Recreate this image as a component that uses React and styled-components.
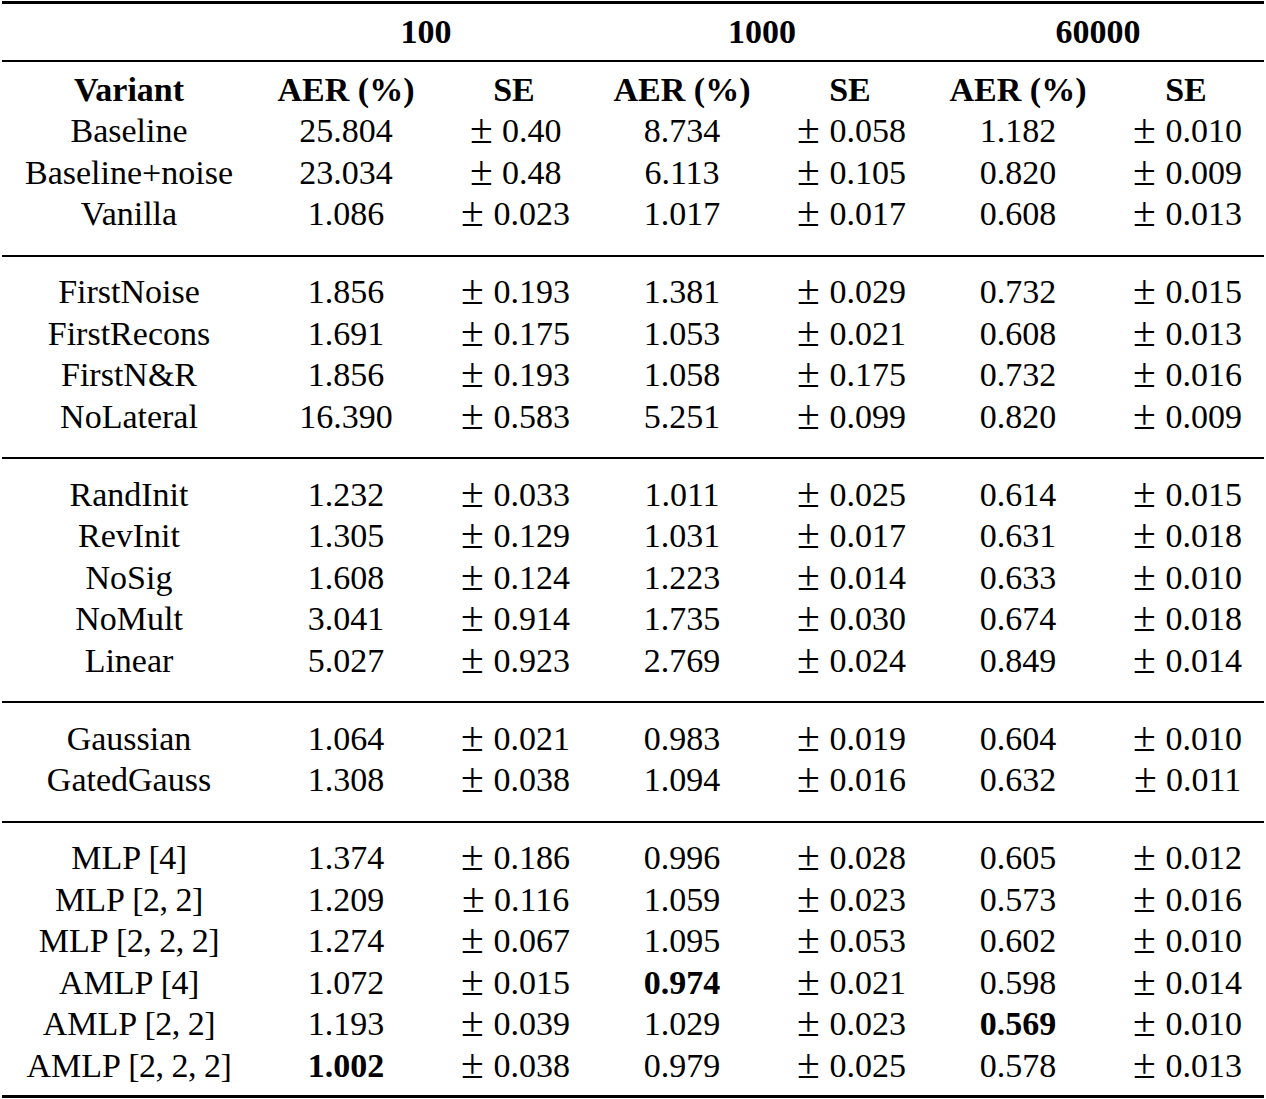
import React from 'react';
import styled, { createGlobalStyle } from 'styled-components';

const GlobalStyle = createGlobalStyle`
    html, body {
        margin: 0;
        padding: 0;
        background: #ffffff;
    }
    body {
        font-family: "Liberation Serif", "Times New Roman", serif;
        color: #000000;
    }
`;

const COLS = '258px 176px 160px 176px 160px 176px 160px';

// Styled
const Table = styled.div`
    width: 1266px;
    display: flex;
    flex-direction: column;
    font-size: 34px;
    padding-top: 1px;
`;

const Rule = styled.div`
    height: ${p => p.$weight}px;
    background: #000;
    margin: ${p => p.$above}px 2px ${p => p.$below}px;
`;

const GroupRow = styled.div`
    display: grid;
    grid-template-columns: 258px 336px 336px 336px;
    height: 55px;
    align-items: center;
    font-weight: bold;
`;

const Row = styled.div`
    display: grid;
    grid-template-columns: ${COLS};
    height: 41.5px;
    align-items: center;
    font-weight: ${p => (p.$head ? 'bold' : 'normal')};
    margin-top: ${p => p.$top || 0}px;
`;

const Cell = styled.div`
    text-align: center;
    white-space: nowrap;
    line-height: 1;
    font-weight: ${p => (p.$bold ? 'bold' : 'inherit')};
`;

const MathArg = styled.span`
    font-weight: normal;
    letter-spacing: -0.5px;
`;

const PlusMinus = styled.span`
    display: inline-block;
    width: 0.84em;
    text-align: center;
    margin-right: 0.2em;
    transform: translateY(-1px) scale(1.22);
`;

const groups = [
    [
        ['Baseline', '25.804', '0.40', '8.734', '0.058', '1.182', '0.010'],
        ['Baseline+noise', '23.034', '0.48', '6.113', '0.105', '0.820', '0.009'],
        ['Vanilla', '1.086', '0.023', '1.017', '0.017', '0.608', '0.013'],
    ],
    [
        ['FirstNoise', '1.856', '0.193', '1.381', '0.029', '0.732', '0.015'],
        ['FirstRecons', '1.691', '0.175', '1.053', '0.021', '0.608', '0.013'],
        ['FirstN&R', '1.856', '0.193', '1.058', '0.175', '0.732', '0.016'],
        ['NoLateral', '16.390', '0.583', '5.251', '0.099', '0.820', '0.009'],
    ],
    [
        ['RandInit', '1.232', '0.033', '1.011', '0.025', '0.614', '0.015'],
        ['RevInit', '1.305', '0.129', '1.031', '0.017', '0.631', '0.018'],
        ['NoSig', '1.608', '0.124', '1.223', '0.014', '0.633', '0.010'],
        ['NoMult', '3.041', '0.914', '1.735', '0.030', '0.674', '0.018'],
        ['Linear', '5.027', '0.923', '2.769', '0.024', '0.849', '0.014'],
    ],
    [
        ['Gaussian', '1.064', '0.021', '0.983', '0.019', '0.604', '0.010'],
        ['GatedGauss', '1.308', '0.038', '1.094', '0.016', '0.632', '0.011'],
    ],
    [
        [['MLP', '[4]'], '1.374', '0.186', '0.996', '0.028', '0.605', '0.012'],
        [['MLP', '[2, 2]'], '1.209', '0.116', '1.059', '0.023', '0.573', '0.016'],
        [['MLP', '[2, 2, 2]'], '1.274', '0.067', '1.095', '0.053', '0.602', '0.010'],
        [['AMLP', '[4]'], '1.072', '0.015', '*0.974', '0.021', '0.598', '0.014'],
        [['AMLP', '[2, 2]'], '1.193', '0.039', '1.029', '0.023', '*0.569', '0.010'],
        [['AMLP', '[2, 2, 2]'], '*1.002', '0.038', '0.979', '0.025', '0.578', '0.013'],
    ],
];

const Name = ({ value }) => Array.isArray(value)
    ? <>{value[0]} <MathArg>{value[1]}</MathArg></>
    : value;

const DataRow = ({ row }) => <Row>
    <Cell><Name value={row[0]} /></Cell>
    {row.slice(1).map((v, i) => {
        if (i % 2 === 1) {
            return <Cell key={i}><PlusMinus>±</PlusMinus>{v}</Cell>;
        }
        const bold = v.startsWith('*');
        return <Cell key={i} $bold={bold}>{bold ? v.slice(1) : v}</Cell>;
    })}
</Row>;

const App = () => <>
    <GlobalStyle />
    <Table>
        <Rule $weight={3} $above={0} $below={0} />
        <GroupRow>
            <Cell />
            <Cell>100</Cell>
            <Cell>1000</Cell>
            <Cell>60000</Cell>
        </GroupRow>
        <Rule $weight={2} $above={1} $below={0} />
        <Row $head $top={7}>
            <Cell>Variant</Cell>
            <Cell>AER (%)</Cell>
            <Cell>SE</Cell>
            <Cell>AER (%)</Cell>
            <Cell>SE</Cell>
            <Cell>AER (%)</Cell>
            <Cell>SE</Cell>
        </Row>
        {groups.map((g, gi) => <React.Fragment key={gi}>
            {gi > 0 && <Rule $weight={2} $above={19.5} $below={15} />}
            {g.map((row, ri) => <DataRow key={ri} row={row} />)}
        </React.Fragment>)}
        <Rule $weight={3} $above={8} $below={2} />
    </Table>
</>;

export default App;
